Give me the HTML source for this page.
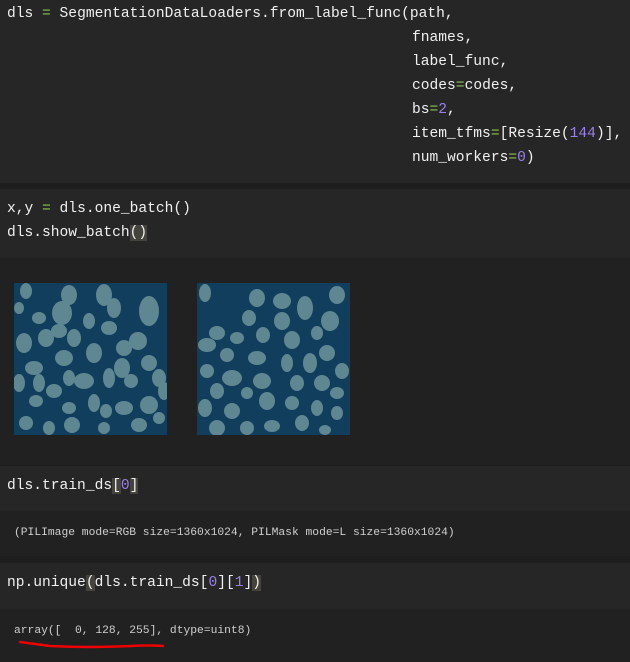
<!DOCTYPE html>
<html><head><meta charset="utf-8"><style>
body{margin:0;width:630px;height:662px;background:#1e1e1e;position:relative;overflow:hidden;font-family:"Liberation Mono","DejaVu Sans Mono",monospace;}
.b{position:absolute;left:0;width:630px;}
.code{background:#262626;}
.out{background:#212121;}
.l{position:absolute;left:7px;font-size:14.6px;color:#f0f0f0;white-space:pre;line-height:20px;}
.o{position:absolute;left:14px;font-size:11.3px;color:#cfcfcf;white-space:pre;line-height:14px;}
.g{color:#8bc34a}.n{color:#9b7ff0}.h{background:#45443c}
</style></head><body>
<div class="b code" style="top:0;height:183px"></div>
<div class="b code" style="top:189px;height:69px"></div>
<div class="b out" style="top:258px;height:207px"></div>
<div class="b code" style="top:466px;height:45px"></div>
<div class="b out" style="top:511px;height:45px"></div>
<div class="b code" style="top:563px;height:46px"></div>
<div class="b out" style="top:609px;height:53px"></div>

<div class="l" style="top:4px">dls <span class="g">=</span> SegmentationDataLoaders.from_label_func(path,</div>
<div class="l" style="top:28px;left:412px">fnames,</div>
<div class="l" style="top:52px;left:412px">label_func,</div>
<div class="l" style="top:76px;left:412px">codes<span class="g">=</span>codes,</div>
<div class="l" style="top:100px;left:412px">bs<span class="g">=</span><span class="n">2</span>,</div>
<div class="l" style="top:124px;left:412px">item_tfms<span class="g">=</span>[Resize(<span class="n">144</span>)],</div>
<div class="l" style="top:148px;left:412px">num_workers<span class="g">=</span><span class="n">0</span>)</div>

<div class="l" style="top:199px">x,y <span class="g">=</span> dls.one_batch()</div>
<div class="l" style="top:223px">dls.show_batch<span class="h">()</span></div>

<svg style="position:absolute;left:14px;top:283px" width="153" height="152" viewBox="0 0 153 152">
<rect width="153" height="152" fill="#123e5d"/>
<g fill="#5f8791">
<ellipse cx="12" cy="8" rx="6" ry="8"/><ellipse cx="55" cy="12" rx="8" ry="10"/><ellipse cx="90" cy="12" rx="8" ry="11"/><ellipse cx="100" cy="25" rx="7" ry="10"/><ellipse cx="135" cy="28" rx="10" ry="15"/><ellipse cx="48" cy="30" rx="10" ry="12"/>
<ellipse cx="25" cy="35" rx="7" ry="6"/><ellipse cx="5" cy="25" rx="5" ry="6"/><ellipse cx="45" cy="48" rx="8" ry="7"/><ellipse cx="75" cy="38" rx="6" ry="8"/><ellipse cx="95" cy="45" rx="8" ry="7"/><ellipse cx="32" cy="55" rx="8" ry="9"/>
<ellipse cx="10" cy="60" rx="8" ry="10"/><ellipse cx="60" cy="55" rx="7" ry="9"/><ellipse cx="50" cy="75" rx="9" ry="8"/><ellipse cx="80" cy="70" rx="8" ry="10"/><ellipse cx="110" cy="65" rx="8" ry="8"/><ellipse cx="124" cy="58" rx="9" ry="9"/>
<ellipse cx="108" cy="85" rx="8" ry="10"/><ellipse cx="135" cy="80" rx="8" ry="8"/><ellipse cx="145" cy="95" rx="7" ry="9"/><ellipse cx="20" cy="85" rx="9" ry="7"/><ellipse cx="5" cy="100" rx="6" ry="9"/><ellipse cx="25" cy="100" rx="6" ry="9"/>
<ellipse cx="55" cy="95" rx="6" ry="8"/><ellipse cx="70" cy="98" rx="10" ry="8"/><ellipse cx="95" cy="95" rx="6" ry="10"/><ellipse cx="117" cy="98" rx="7" ry="7"/><ellipse cx="40" cy="108" rx="8" ry="7"/><ellipse cx="150" cy="108" rx="6" ry="9"/>
<ellipse cx="22" cy="118" rx="7" ry="6"/><ellipse cx="80" cy="120" rx="6" ry="9"/><ellipse cx="110" cy="125" rx="9" ry="7"/><ellipse cx="135" cy="122" rx="9" ry="9"/><ellipse cx="92" cy="128" rx="6" ry="7"/><ellipse cx="55" cy="125" rx="7" ry="6"/>
<ellipse cx="12" cy="140" rx="7" ry="7"/><ellipse cx="35" cy="145" rx="6" ry="7"/><ellipse cx="58" cy="142" rx="8" ry="8"/><ellipse cx="90" cy="145" rx="6" ry="6"/><ellipse cx="125" cy="142" rx="8" ry="7"/><ellipse cx="145" cy="135" rx="6" ry="6"/>
</g></svg>
<svg style="position:absolute;left:197px;top:283px" width="153" height="152" viewBox="0 0 153 152">
<rect width="153" height="152" fill="#123e5d"/>
<g fill="#5f8791">
<ellipse cx="8" cy="10" rx="6" ry="9"/><ellipse cx="60" cy="15" rx="8" ry="9"/><ellipse cx="85" cy="18" rx="9" ry="8"/><ellipse cx="108" cy="25" rx="8" ry="12"/><ellipse cx="140" cy="12" rx="8" ry="9"/><ellipse cx="133" cy="38" rx="9" ry="10"/>
<ellipse cx="52" cy="35" rx="7" ry="8"/><ellipse cx="85" cy="38" rx="8" ry="9"/><ellipse cx="20" cy="50" rx="8" ry="7"/><ellipse cx="40" cy="55" rx="7" ry="6"/><ellipse cx="66" cy="52" rx="7" ry="8"/><ellipse cx="95" cy="57" rx="8" ry="9"/>
<ellipse cx="120" cy="50" rx="6" ry="7"/><ellipse cx="130" cy="70" rx="8" ry="8"/><ellipse cx="10" cy="62" rx="9" ry="7"/><ellipse cx="30" cy="72" rx="7" ry="7"/><ellipse cx="60" cy="75" rx="9" ry="7"/><ellipse cx="90" cy="80" rx="6" ry="9"/>
<ellipse cx="113" cy="80" rx="7" ry="10"/><ellipse cx="145" cy="88" rx="7" ry="8"/><ellipse cx="10" cy="88" rx="7" ry="7"/><ellipse cx="35" cy="95" rx="10" ry="8"/><ellipse cx="65" cy="98" rx="9" ry="8"/><ellipse cx="100" cy="100" rx="7" ry="8"/>
<ellipse cx="125" cy="100" rx="8" ry="8"/><ellipse cx="20" cy="108" rx="7" ry="8"/><ellipse cx="50" cy="110" rx="6" ry="6"/><ellipse cx="70" cy="118" rx="8" ry="9"/><ellipse cx="95" cy="120" rx="7" ry="7"/><ellipse cx="140" cy="110" rx="7" ry="6"/>
<ellipse cx="8" cy="125" rx="7" ry="9"/><ellipse cx="35" cy="128" rx="8" ry="8"/><ellipse cx="120" cy="125" rx="6" ry="8"/><ellipse cx="140" cy="130" rx="6" ry="7"/><ellipse cx="20" cy="145" rx="8" ry="8"/><ellipse cx="50" cy="145" rx="7" ry="7"/>
<ellipse cx="75" cy="143" rx="8" ry="6"/><ellipse cx="105" cy="140" rx="7" ry="8"/><ellipse cx="128" cy="147" rx="6" ry="5"/>
</g></svg>

<div class="l" style="top:476px">dls.train_ds<span class="h">[</span><span class="n">0</span><span class="h">]</span></div>
<div class="o" style="top:526px">(PILImage mode=RGB size=1360x1024, PILMask mode=L size=1360x1024)</div>
<div class="l" style="top:573px">np.unique<span class="h">(</span>dls.train_ds[<span class="n">0</span>][<span class="n">1</span>]<span class="h">)</span></div>
<div class="o" style="top:624px">array([  0, 128, 255], dtype=uint8)</div>
<svg style="position:absolute;left:0;top:636px" width="200" height="20"><path d="M20 6 Q35 8 50 10 Q90 12 130 10 Q150 9 163 10" stroke="#ee0000" stroke-width="2.5" fill="none" stroke-linecap="round"/></svg>
</body></html>
